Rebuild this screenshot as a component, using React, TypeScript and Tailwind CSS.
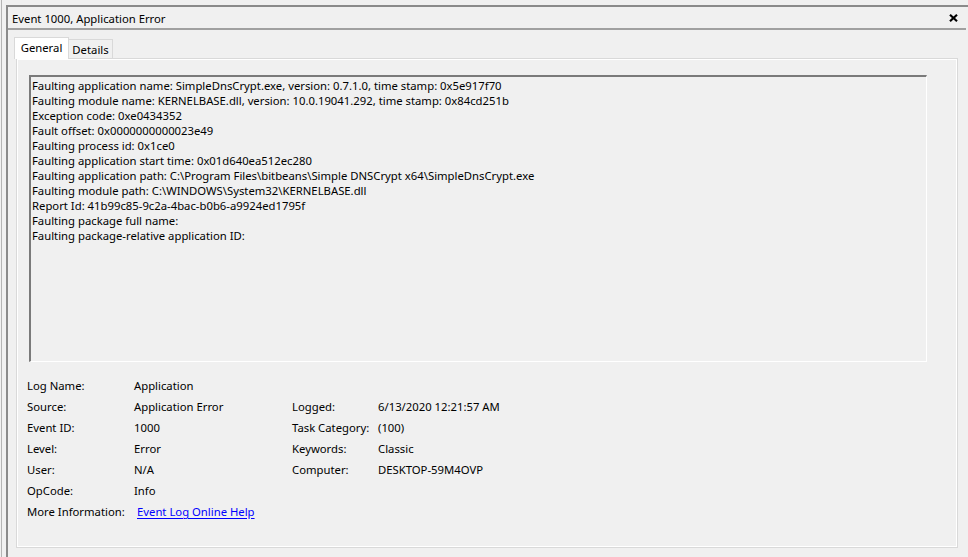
import React from "react";

const lines = [
  "Faulting application name: SimpleDnsCrypt.exe, version: 0.7.1.0, time stamp: 0x5e917f70",
  "Faulting module name: KERNELBASE.dll, version: 10.0.19041.292, time stamp: 0x84cd251b",
  "Exception code: 0xe0434352",
  "Fault offset: 0x0000000000023e49",
  "Faulting process id: 0x1ce0",
  "Faulting application start time: 0x01d640ea512ec280",
  "Faulting application path: C:\\Program Files\\bitbeans\\Simple DNSCrypt x64\\SimpleDnsCrypt.exe",
  "Faulting module path: C:\\WINDOWS\\System32\\KERNELBASE.dll",
  "Report Id: 41b99c85-9c2a-4bac-b0b6-a9924ed1795f",
  "Faulting package full name: ",
  "Faulting package-relative application ID: ",
];

const rows: [string, React.ReactNode, string?, string?][] = [
  ["Log Name:", "Application"],
  ["Source:", "Application Error", "Logged:", "6/13/2020 12:21:57 AM"],
  ["Event ID:", "1000", "Task Category:", "(100)"],
  ["Level:", "Error", "Keywords:", "Classic"],
  ["User:", "N/A", "Computer:", "DESKTOP-59M4OVP"],
  ["OpCode:", "Info"],
];

export default function App() {
  return (
    <div className="w-[968px] h-[557px] bg-[#f0f0f0] overflow-hidden pl-[1px] text-[11.3px] leading-[15px] text-black font-['Noto_Sans',sans-serif]">
      <div className="h-full border-l border-[#b4b4b4] pl-[4px]">
        <div className="h-full pt-[5px]">
          <div className="h-full border-l-2 border-t-2 border-[#8a8a8a] flex flex-col">
            {/* title bar */}
            <div className="h-[21px] flex items-center justify-between pl-[4px] pr-[10px]">
              <span className="pt-[1px]">Event 1000, Application Error</span>
              <svg width="9" height="8" viewBox="0 0 9 8" className="mt-[1px]">
                <path d="M1 0.8 L8 7.2 M8 0.8 L1 7.2" stroke="#000" strokeWidth="2.2" />
              </svg>
            </div>
            <div className="h-[2px] bg-[#a0a0a0] mr-[2px]" />
            {/* tabs */}
            <div className="pl-[6px] pt-[7px] flex-1 flex flex-col">
              <div className="flex items-end h-[21px] relative z-10">
                <div className="h-[22px] w-[55px] bg-white border border-b-0 border-[#d9d9d9] flex items-center justify-center pb-[3px] -mb-[1px]">
                  General
                </div>
                <div className="h-[19px] w-[44px] bg-[#f0f0f0] border border-l-0 border-b-0 border-[#d9d9d9] flex items-center justify-center">
                  Details
                </div>
              </div>
              {/* panel */}
              <div className="ml-[2px] w-[942px] h-[490px] border border-[#d9d9d9] bg-[#f0f0f0]">
                <div className="h-full border border-white pl-[11px] pt-[15px]">
                  <div className="w-[898px] h-[287px] border-t-2 border-l-2 border-t-[#7a7a7a] border-l-[#7a7a7a] border-r border-b border-r-white border-b-white pl-[1px] pt-[1px]">
                    {lines.map((l, i) => (
                      <div key={i} className="whitespace-pre h-[15px]">{l}</div>
                    ))}
                  </div>
                  <div className="mt-[13px] -ml-[2px]">
                    {rows.map(([a, b, c, d], i) => (
                      <div key={i} className="flex h-[21px] items-center">
                        <div className="w-[107px]">{a}</div>
                        <div className="w-[158px]">{b}</div>
                        {c && <div className="w-[86px]">{c}</div>}
                        {d && <div>{d}</div>}
                      </div>
                    ))}
                    <div className="flex h-[21px] items-center">
                      <div className="w-[110px]">More Information:</div>
                      <a className="text-[#0000ff] underline underline-offset-[2px] cursor-pointer">Event Log Online Help</a>
                    </div>
                  </div>
                </div>
              </div>
            </div>
          </div>
        </div>
      </div>
    </div>
  );
}
